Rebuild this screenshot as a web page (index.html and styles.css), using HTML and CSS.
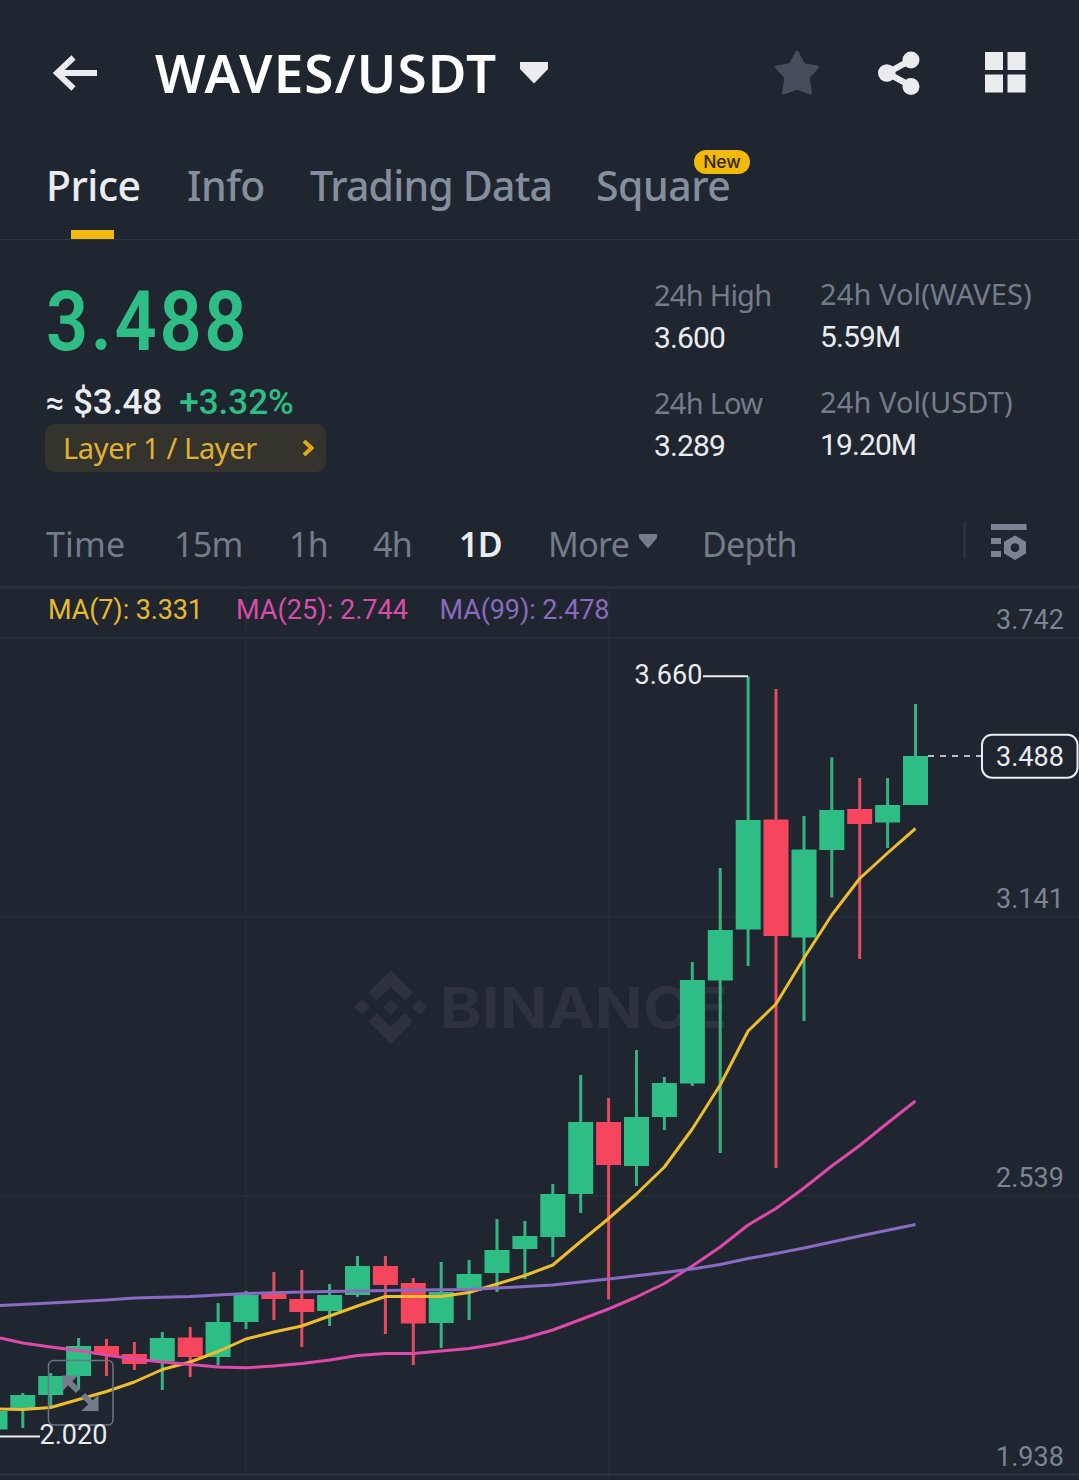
FILE: index.html
```html
<!DOCTYPE html>
<html lang="en">
<head>
<meta charset="utf-8">
<title>WAVES/USDT</title>
<link rel="stylesheet" href="styles.css">
</head>
<body>
<main class="screen">
  <header class="topbar">
    <svg class="back" width="46" height="40" viewBox="0 0 46 40"><path d="M44 20H5M20.500 4.500L4 20l16.500 15.500" fill="none" stroke="#eaecef" stroke-width="6"/></svg>
    <h1 class="pair">WAVES/USDT</h1>
    <svg class="pair-caret" width="28" height="22" viewBox="0 0 28 22"><path d="M0 0h28v7L14 21.500 0 7z" fill="#eaecef"/></svg>
    <svg class="star" width="46" height="48" viewBox="0 0 46 48"><path d="M23 3l6.700 12.700 13.800 2.300-9.500 10.800 2.600 15.200L23 39 9.400 44l2.600-15.200L2.500 18l13.800-2.300z" fill="#474d5b" stroke="#474d5b" stroke-width="3" stroke-linejoin="round"/></svg>
    <svg class="share" width="42" height="44" viewBox="0 0 42 44"><g fill="#eaecef" stroke="#eaecef"><path d="M33 9L9 22l24 13" fill="none" stroke-width="6"/><circle cx="33" cy="9" r="8.500" stroke="none"/><circle cx="8.800" cy="22" r="8.800" stroke="none"/><circle cx="33" cy="35.500" r="8.500" stroke="none"/></g></svg>
    <svg class="grid-icon" width="41" height="41" viewBox="0 0 41 41"><path d="M0 0h18v18H0zM22.500 0h18v18h-18zM0 22.500h18v18H0zM22.500 22.500h18v18h-18z" fill="#eaecef"/></svg>
  </header>

  <nav class="tabs">
    <a class="tab tab-active"><span class="t-price">Price</span></a>
    <a class="tab"><span class="t-info">Info</span></a>
    <a class="tab"><span class="t-data">Trading Data</span></a>
    <a class="tab"><span class="t-square">Square</span><span class="badge">New</span></a>
  </nav>

  <section class="summary">
    <div class="quote">
      <div class="price">3.488</div>
      <div class="sub"><span class="usd"><span class="approx">≈</span> $3.48</span><span class="change">+3.32%</span></div>
      <div class="tag"><span class="tag-text">Layer 1 / Layer</span><svg width="12" height="18" viewBox="0 0 12 18"><path d="M2 2l7.500 7L2 16" fill="none" stroke="#dba617" stroke-width="4"/></svg></div>
    </div>
    <dl class="stats">
      <div class="stat"><dt>24h High</dt><dd>3.600</dd></div>
      <div class="stat stat-right"><dt>24h Vol(WAVES)</dt><dd>5.59M</dd></div>
      <div class="stat"><dt>24h Low</dt><dd>3.289</dd></div>
      <div class="stat stat-right"><dt>24h Vol(USDT)</dt><dd>19.20M</dd></div>
    </dl>
  </section>

  <nav class="intervals">
    <span class="loose">Time</span><span>15m</span><span>1h</span><span>4h</span><span class="interval-active">1D</span><span>More</span>
    <svg class="more-caret" width="18" height="15" viewBox="0 0 18 15"><path d="M0 0h18v4L9 14.500 0 4z" fill="#747b8b"/></svg>
    <span>Depth</span>
    <i class="divider"></i>
    <svg class="settings" width="36" height="36" viewBox="0 0 36 36"><path d="M0 0h35.500v6H0zM0 14h10v6H0zM0 27h10v6H0z" fill="#7c8494"/><path fill-rule="evenodd" d="M24 11.500L35 17.800V29.500L24 36 13 29.500V17.800zM24 19.300a4.400 4.400 0 1 0 0 8.800 4.400 4.400 0 0 0 0-8.800z" fill="#7c8494"/></svg>
  </nav>

  <section class="chart">
    <svg width="1079" height="894" viewBox="0 586 1079 894">
      <path class="gridline" d="M0 638H1079M0 917H1079M0 1196H1079M246 588V1480M608.600 588V1480"/>
      <path class="baseline" d="M0 1474.500H1079"/>

      <g class="watermark">
        <path d="M390.800 970l22.500 22.500-8.500 8.500-14-14-14 14-8.500-8.500zM390.800 1044l22.500-22.500-8.500-8.500-14 14-14-14-8.500 8.500zM390.800 999.200l7.800 7.800-7.800 7.800-7.800-7.800zM362 999.200l7.800 7.800-7.800 7.800-7.800-7.800zM419.600 999.200l7.800 7.800-7.800 7.800-7.800-7.800z"/>
        <text x="440" y="1027.500" textLength="288" lengthAdjust="spacingAndGlyphs">BINANCE</text>
      </g>

      <g class="up">
        <path class="wick" d="M22.800 1393V1428M50.700 1373V1408M78.600 1338V1389M162.300 1332V1390M218.100 1303V1365.500M246 1291V1329M329.600 1284V1326M357.500 1256V1297M441.200 1262V1348M469.100 1260V1320M497 1219V1292M524.900 1221V1279M552.800 1184V1257M580.700 1075V1213M636.500 1050V1186M664.400 1077V1130M692.300 962V1086M720.200 868V1153M748.100 676V966M804 816V1021M831.800 757.500V897.500M887.600 778V848M915.500 704V805"/>
        <path d="M-17.500 1411h25v18.500h-25zM10.300 1395h25v14h-25zM38.200 1376h25v19h-25zM66.100 1346h25v30h-25zM149.800 1338h25v23.500h-25zM205.600 1322h25v35h-25zM233.500 1295h25v27h-25zM317.100 1295h25v16h-25zM345 1266h25v29h-25zM428.700 1292h25v31h-25zM456.600 1274h25v17h-25zM484.500 1250h25v23h-25zM512.400 1236h25v13h-25zM540.300 1194h25v43h-25zM568.200 1122h25v72h-25zM624 1117h25v49h-25zM651.900 1083h25v34h-25zM679.900 980h25v103.500h-25zM707.800 930h25v50.500h-25zM735.700 820h25v109.500h-25zM791.500 849.500h25v88h-25zM819.300 810h25v40h-25zM875.100 805h25v17.500h-25zM903 756h25v49h-25z"/>
      </g>
      <g class="down">
        <path class="wick" d="M106.500 1339V1376M134.400 1342V1370M190.200 1327V1377M273.900 1272V1320M301.800 1270V1347M385.400 1256V1334M413.300 1278V1365M608.600 1098V1299.500M776 689V1168M859.700 778V959"/>
        <path d="M94 1346h25v9h-25zM121.900 1354h25v10h-25zM177.700 1337.500h25v19.500h-25zM261.400 1294h25v5h-25zM289.300 1299h25v13h-25zM372.900 1266h25v19h-25zM400.800 1283h25v40.500h-25zM596.100 1122h25v43h-25zM763.500 819.500h25v116.500h-25zM847.200 809h25v15h-25z"/>
      </g>

      <polyline class="ma ma7" points="0,1409 22.800,1409.500 50.700,1407.500 78.600,1399.500 106.500,1391.500 134.400,1382 162.300,1369.500 190.200,1362 218.100,1351.500 246,1339 273.900,1332 301.800,1326 329.600,1316 357.500,1306 385.400,1296.500 413.300,1296.500 441.200,1296.500 469.100,1292.500 497,1284 524.900,1275.500 552.800,1265 580.700,1241.500 608.600,1218.500 636.500,1194 664.400,1167 692.300,1129 720.200,1085 748.100,1031 776,1004 804,958 831.800,915 859.700,878.500 887.600,853 915.500,828.500"/>
      <polyline class="ma ma25" points="0,1338 22.800,1343 50.700,1347 78.600,1350.500 106.500,1355 134.400,1359 162.300,1362 190.200,1364.500 218.100,1367 246,1367.800 273.900,1366 301.800,1363.500 329.600,1360 357.500,1355.500 385.400,1353.500 413.300,1353.500 441.200,1351 469.100,1348.500 497,1344 524.900,1338 552.800,1330 580.700,1319.500 608.600,1309 636.500,1297 664.400,1283.500 692.300,1266 720.200,1247 748.100,1225 776,1208.500 804,1188 831.800,1166 859.700,1145.500 887.600,1123 915.500,1101"/>
      <polyline class="ma ma99" points="0,1305.500 50.700,1303 106.500,1300 134.400,1298 190.200,1296.500 246,1293.500 301.800,1292 357.500,1291 413.300,1290 469.100,1289.500 497,1288 552.800,1285 608.600,1279 664.400,1272.500 692.300,1269 720.200,1264.500 748.100,1258.500 776,1253.500 804,1248 859.700,1236 915.500,1224.500"/>

      <g class="expand">
        <rect x="48.500" y="1360.500" width="64.500" height="64.500" rx="5" fill="none" stroke="#6c7382" stroke-width="1.500"/>
        <path d="M62.500 1375.500H78L62.500 1391zM98.500 1411H81L98.500 1395z"/>
        <path class="stem" d="M66 1379L78 1391M83 1395L95 1407"/>
      </g>

      <g class="ma-labels">
        <text class="l7" x="48" y="619" textLength="155">MA(7): 3.331</text>
        <text class="l25" x="236" y="619" textLength="172">MA(25): 2.744</text>
        <text class="l99" x="439.500" y="619" textLength="170">MA(99): 2.478</text>
      </g>
      <g class="axis">
        <text x="996" y="629">3.742</text>
        <text x="996" y="908">3.141</text>
        <text x="996" y="1187">2.539</text>
        <text x="996" y="1466">1.938</text>
      </g>
      <g class="marks">
        <path d="M703 676.300H748M0 1436.500H40"/>
        <path class="last" d="M928 756H981" stroke-dasharray="6 6"/>
        <rect x="982" y="734.700" width="95.500" height="43" rx="10" fill="#1f252f"/>
        <text x="634.500" y="684">3.660</text>
        <text x="39.500" y="1444">2.020</text>
        <text x="996" y="766">3.488</text>
      </g>
    </svg>
  </section>
</main>
</body>
</html>
```
FILE: styles.css
```css
* { box-sizing: border-box; }

body {
  margin: 0;
  background: #1f2630;
  color: #eaecef;
  font-family: "Noto Sans", sans-serif;
}

svg { display: block; }

.screen { width: 1079px; height: 1480px; overflow: hidden; }

.topbar {
  display: flex;
  align-items: center;
  height: 145px;
  padding: 0 53px;
}
.pair {
  width: 341px;
  margin: 1px 0 0 56px;
  font-size: 53px;
  font-weight: 600;
  line-height: 60px;
  letter-spacing: 1.1px;
  color: #fff;
  white-space: nowrap;
}
.pair-caret { margin-left: 24px; }
.star { margin-left: auto; }
.share { margin-left: 58px; }
.grid-icon { margin-left: 65px; }

.tabs {
  display: grid;
  grid-template-columns: 141px 123px 286px 160px;
  height: 95px;
  padding-left: 46px;
  border-bottom: 1px solid #2f3641;
}
.tab {
  position: relative;
  padding-top: 10px;
  font-size: 41px;
  font-weight: 500;
  line-height: 60px;
  letter-spacing: -0.5px;
  color: #848e9c;
  white-space: nowrap;
}
.t-data { letter-spacing: -0.8px; }
.tab-active { color: #eaecef; }
.tab-active::after {
  content: "";
  position: absolute;
  left: 25px;
  bottom: 0;
  width: 43px;
  height: 9px;
  background: #f0b90b;
}
.badge {
  position: absolute;
  left: 98px;
  top: 5px;
  width: 56px;
  height: 24px;
  border-radius: 12px;
  background: #f0b90b;
  color: #33290a;
  font: 500 17.5px/24px Inter, sans-serif;
  letter-spacing: 0;
  text-align: center;
}

.summary {
  display: grid;
  grid-template-columns: 608px 1fr;
  height: 263px;
  padding: 30px 0 0 46px;
}
.price {
  height: 100px;
  font: 600 84px/103px Roboto, sans-serif;
  letter-spacing: 3px;
  color: #2ebd85;
  transform: scaleX(0.88);
  transform-origin: left;
}
.sub {
  display: flex;
  gap: 17px;
  height: 54px;
  font: 500 35px/65px Roboto, sans-serif;
}
.approx { font-size: 32px; }
.change { color: #2ebd85; }
.tag {
  display: flex;
  align-items: center;
  justify-content: space-between;
  width: 281px;
  height: 48px;
  margin-left: -1px;
  padding: 0 12px 0 18px;
  border-radius: 10px;
  background: #34332c;
  color: #e0b133;
  font-size: 29px;
  letter-spacing: -0.35px;
}
.tag-text { margin-top: -2px; }
.stats {
  display: grid;
  grid-template-columns: 166px 1fr;
  grid-auto-rows: 108px;
  margin: 0;
}
.stat { padding-top: 4px; }
.stat-right { padding-top: 3px; }
.stat dt {
  font-size: 29px;
  line-height: 42px;
  letter-spacing: -0.75px;
  color: #747b8a;
  white-space: nowrap;
}
.stat-right dt { letter-spacing: 0.1px; }
.stat dd {
  margin: 0;
  font: 400 30px/44px Roboto, sans-serif;
  letter-spacing: -0.9px;
}

.intervals {
  display: grid;
  grid-template-columns: 128px 115px 84px 86px 89px 91px 63px 261px 28px 36px;
  height: 83px;
  padding-left: 46px;
  font-size: 34px;
  line-height: 83px;
  letter-spacing: -0.7px;
  color: #747b8a;
  white-space: nowrap;
}
.loose { letter-spacing: 0.2px; }
.interval-active { font-weight: 600; color: #eaecef; }
.more-caret { margin-top: 31px; }
.divider { width: 3px; height: 36px; margin-top: 20px; background: #2c333e; }
.settings { margin-top: 21px; }

.chart { box-shadow: inset 0 3px #2a303b; }
.chart text { font: 400 27px Roboto, sans-serif; }
.gridline { fill: none; stroke: #242b35; stroke-width: 2; }
.baseline { stroke: #2e3540; stroke-width: 2; }
.chart .watermark { fill: #2d323d; }
.chart .watermark text { font: 700 56px Inter, sans-serif; }
.wick { fill: none; stroke-width: 3; }
.up { fill: #2ebd85; }
.up .wick { stroke: #36b383; }
.down { fill: #f6465d; }
.down .wick { stroke: #e24b60; }
.ma { fill: none; stroke-width: 3; stroke-linejoin: round; }
.ma7 { stroke: #edbd2e; }
.ma25 { stroke: #df49aa; }
.ma99 { stroke: #8b6ac4; }
.expand path { fill: #747b8b; }
.expand .stem { fill: none; stroke: #747b8b; stroke-width: 6; }
.l7 { fill: #e9b92b; }
.l25 { fill: #d94ca9; }
.l99 { fill: #8a6abf; }
.axis { fill: #7c8392; }
.marks { fill: #eaecef; }
.marks path, .marks rect { stroke: #eaecef; stroke-width: 2; }
.marks .last { stroke: #b9bcc2; }
```
